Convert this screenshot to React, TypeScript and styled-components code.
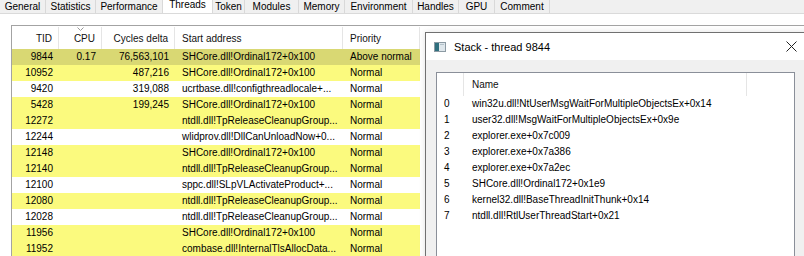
import styled, { createGlobalStyle } from 'styled-components';

const GlobalStyle = createGlobalStyle`
  html, body {
    margin: 0;
    padding: 0;
    background: #fff;
  }
  body {
    font-family: 'Liberation Sans', Arial, sans-serif;
    font-size: 10px;
    color: #000;
  }
`;

type Tone = 'selected' | 'yellow' | 'plain';

const tabs = [
  { label: 'General', width: 46 },
  { label: 'Statistics', width: 50 },
  { label: 'Performance', width: 67 },
  { label: 'Threads', width: 50, active: true },
  { label: 'Token', width: 32 },
  { label: 'Modules', width: 54 },
  { label: 'Memory', width: 46 },
  { label: 'Environment', width: 68 },
  { label: 'Handles', width: 46 },
  { label: 'GPU', width: 36 },
  { label: 'Comment', width: 55 },
];

const threads: { tid: string; cpu: string; cycles: string; start: string; priority: string; tone: Tone }[] = [
  { tid: '9844', cpu: '0.17', cycles: '76,563,101', start: 'SHCore.dll!Ordinal172+0x100', priority: 'Above normal', tone: 'selected' },
  { tid: '10952', cpu: '', cycles: '487,216', start: 'SHCore.dll!Ordinal172+0x100', priority: 'Normal', tone: 'yellow' },
  { tid: '9420', cpu: '', cycles: '319,088', start: 'ucrtbase.dll!configthreadlocale+...', priority: 'Normal', tone: 'plain' },
  { tid: '5428', cpu: '', cycles: '199,245', start: 'SHCore.dll!Ordinal172+0x100', priority: 'Normal', tone: 'yellow' },
  { tid: '12272', cpu: '', cycles: '', start: 'ntdll.dll!TpReleaseCleanupGroup...', priority: 'Normal', tone: 'yellow' },
  { tid: '12244', cpu: '', cycles: '', start: 'wlidprov.dll!DllCanUnloadNow+0...', priority: 'Normal', tone: 'plain' },
  { tid: '12148', cpu: '', cycles: '', start: 'SHCore.dll!Ordinal172+0x100', priority: 'Normal', tone: 'yellow' },
  { tid: '12140', cpu: '', cycles: '', start: 'ntdll.dll!TpReleaseCleanupGroup...', priority: 'Normal', tone: 'yellow' },
  { tid: '12100', cpu: '', cycles: '', start: 'sppc.dll!SLpVLActivateProduct+...', priority: 'Normal', tone: 'plain' },
  { tid: '12080', cpu: '', cycles: '', start: 'ntdll.dll!TpReleaseCleanupGroup...', priority: 'Normal', tone: 'yellow' },
  { tid: '12028', cpu: '', cycles: '', start: 'ntdll.dll!TpReleaseCleanupGroup...', priority: 'Normal', tone: 'plain' },
  { tid: '11956', cpu: '', cycles: '', start: 'SHCore.dll!Ordinal172+0x100', priority: 'Normal', tone: 'yellow' },
  { tid: '11952', cpu: '', cycles: '', start: 'combase.dll!InternalTlsAllocData...', priority: 'Normal', tone: 'yellow' },
];

const frames = [
  'win32u.dll!NtUserMsgWaitForMultipleObjectsEx+0x14',
  'user32.dll!MsgWaitForMultipleObjectsEx+0x9e',
  'explorer.exe+0x7c009',
  'explorer.exe+0x7a386',
  'explorer.exe+0x7a2ec',
  'SHCore.dll!Ordinal172+0x1e9',
  'kernel32.dll!BaseThreadInitThunk+0x14',
  'ntdll.dll!RtlUserThreadStart+0x21',
];

export default function App() {
  return (
    <>
      <GlobalStyle />
      <Window>
        <TabBar>
          {tabs.map((t) => (
            <Tab key={t.label} $width={t.width} $active={!!t.active}>
              <TabLabel $active={!!t.active}>{t.label}</TabLabel>
            </Tab>
          ))}
        </TabBar>
        <Page>
          <ListBox>
            <ThreadHeader>
              <HeadCell $right>TID</HeadCell>
              <HeadCell $right>
                <SortArrow width="7" height="4" viewBox="0 0 7 4">
                  <path d="M0.5 0.5 L3.5 3.5 L6.5 0.5" fill="none" stroke="#9a9a9a" strokeWidth="1" />
                </SortArrow>
                CPU
              </HeadCell>
              <HeadCell $right>Cycles delta</HeadCell>
              <HeadCell>Start address</HeadCell>
              <HeadCell>Priority</HeadCell>
            </ThreadHeader>
            {threads.map((t) => (
              <ThreadRow key={t.tid} $tone={t.tone}>
                <Cell $right>{t.tid}</Cell>
                <Cell $right>{t.cpu}</Cell>
                <Cell $right>{t.cycles}</Cell>
                <Cell>{t.start}</Cell>
                <Cell>{t.priority}</Cell>
              </ThreadRow>
            ))}
          </ListBox>
        </Page>

        <Dialog>
          <TitleBar>
            <AppIcon width="12" height="10" viewBox="0 0 12 10">
              <rect x="0.5" y="0.5" width="11" height="9" fill="#dfe7ec" stroke="#8c9aa3" />
              <rect x="1" y="1" width="4" height="8" fill="#2f6f7e" />
              <rect x="6" y="2" width="4" height="1" fill="#b4c2ca" />
            </AppIcon>
            <Title>Stack - thread 9844</Title>
            <CloseButton>
              <svg width="11" height="11" viewBox="0 0 11 11">
                <path d="M0.5 0.5 L10.5 10.5 M10.5 0.5 L0.5 10.5" stroke="#222" strokeWidth="1" />
              </svg>
            </CloseButton>
          </TitleBar>
          <DialogBody>
            <StackList>
              <StackHeader>
                <HeadCell />
                <HeadCell $pad={8}>Name</HeadCell>
              </StackHeader>
              {frames.map((f, i) => (
                <StackRow key={i}>
                  <Cell $pad={7}>{i}</Cell>
                  <Cell $pad={8}>{f}</Cell>
                </StackRow>
              ))}
            </StackList>
          </DialogBody>
        </Dialog>
      </Window>
    </>
  );
}

const Window = styled.div`
  position: relative;
  width: 804px;
  height: 256px;
  overflow: hidden;
  background: #fff;
`;

const TabBar = styled.div`
  display: flex;
  height: 13px;
  background: #f0f0f0;
  border-bottom: 1px solid #dadada;
`;

const Tab = styled.div<{ $width: number; $active: boolean }>`
  width: ${(p) => p.$width}px;
  height: 13px;
  line-height: 13px;
  text-align: center;
  white-space: nowrap;
  border-right: 1px solid #d9d9d9;
  box-sizing: border-box;
  background: ${(p) => (p.$active ? '#fff' : '#f0f0f0')};
  color: #000;
`;

const TabLabel = styled.span<{ $active: boolean }>`
  display: inline-block;
  transform: translateY(${(p) => (p.$active ? '-2px' : '0')});
`;

const Page = styled.div`
  padding: 11px 0 0 11px;
`;

const ListBox = styled.div`
  height: 240px;
  border-top: 1px solid #a3a3a3;
  border-left: 1px solid #a3a3a3;
  background: #fff;
`;

const ThreadHeader = styled.div`
  display: grid;
  grid-template-columns: 47px 43px 73px 168px 77px;
  height: 23px;
  padding-top: 1px;
  box-sizing: border-box;
`;

const HeadCell = styled.div<{ $right?: boolean; $pad?: number }>`
  position: relative;
  display: flex;
  align-items: center;
  justify-content: ${(p) => (p.$right ? 'flex-end' : 'flex-start')};
  padding: 0 ${(p) => (p.$right ? 6 : 0)}px 0 ${(p) => (p.$right ? 0 : p.$pad ?? 7)}px;
  border-right: 1px solid #e5e5e5;
  color: #111;
  white-space: nowrap;
  overflow: hidden;
`;

const SortArrow = styled.svg`
  position: absolute;
  left: 18px;
  top: 0;
`;

const toneColor: Record<Tone, string> = {
  selected: '#d9d873',
  yellow: '#fbfa7e',
  plain: '#ffffff',
};

const ThreadRow = styled.div<{ $tone: Tone }>`
  display: grid;
  grid-template-columns: 47px 43px 73px 168px 77px;
  width: 408px;
  height: 16px;
  background: ${(p) => toneColor[p.$tone]};
`;

const Cell = styled.div<{ $right?: boolean; $pad?: number }>`
  line-height: 16px;
  white-space: nowrap;
  overflow: hidden;
  text-align: ${(p) => (p.$right ? 'right' : 'left')};
  padding: 0 ${(p) => (p.$right ? 6 : 0)}px 0 ${(p) => (p.$right ? 0 : p.$pad ?? 7)}px;
  color: #000;
`;

const Dialog = styled.div`
  position: absolute;
  left: 425px;
  top: 32px;
  width: 388px;
  height: 240px;
  border: 1px solid #707070;
  background: #f0f0f0;
  box-shadow: 0 0 6px rgba(0, 0, 0, 0.12);
  display: flex;
  flex-direction: column;
`;

const TitleBar = styled.div`
  display: flex;
  align-items: center;
  height: 27px;
  background: #fff;
`;

const AppIcon = styled.svg`
  margin-left: 8px;
  flex: none;
`;

const Title = styled.div`
  margin-left: 8px;
  font-size: 11px;
  color: #000;
  flex: 1;
`;

const CloseButton = styled.div`
  width: 46px;
  height: 27px;
  display: flex;
  align-items: center;
  justify-content: center;
`;

const DialogBody = styled.div`
  flex: 1;
  padding: 12px 0 0 10px;
`;

const StackList = styled.div`
  width: 359px;
  height: 200px;
  box-sizing: border-box;
  border: 1px solid #8a8f99;
  background: #fff;
`;

const StackHeader = styled.div`
  display: grid;
  grid-template-columns: 27px 283px;
  height: 23px;
`;

const StackRow = styled.div`
  display: grid;
  grid-template-columns: 27px 283px;
  height: 16px;
`;
